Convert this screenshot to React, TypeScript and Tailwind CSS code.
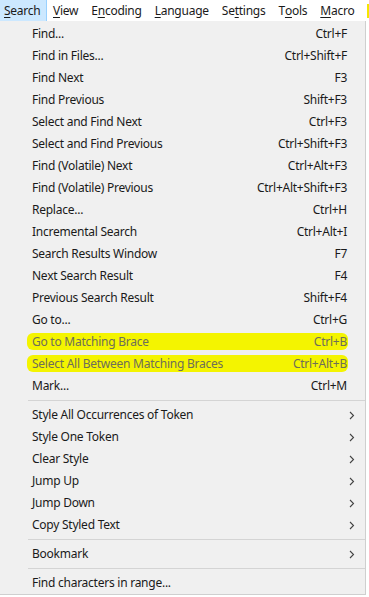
import React from "react";

type Item =
  | { kind: "item"; label: string; shortcut?: string; sub?: boolean; disabled?: boolean; marked?: boolean }
  | { kind: "sep" };

const items: Item[] = [
  { kind: "item", label: "Find...", shortcut: "Ctrl+F" },
  { kind: "item", label: "Find in Files...", shortcut: "Ctrl+Shift+F" },
  { kind: "item", label: "Find Next", shortcut: "F3" },
  { kind: "item", label: "Find Previous", shortcut: "Shift+F3" },
  { kind: "item", label: "Select and Find Next", shortcut: "Ctrl+F3" },
  { kind: "item", label: "Select and Find Previous", shortcut: "Ctrl+Shift+F3" },
  { kind: "item", label: "Find (Volatile) Next", shortcut: "Ctrl+Alt+F3" },
  { kind: "item", label: "Find (Volatile) Previous", shortcut: "Ctrl+Alt+Shift+F3" },
  { kind: "item", label: "Replace...", shortcut: "Ctrl+H" },
  { kind: "item", label: "Incremental Search", shortcut: "Ctrl+Alt+I" },
  { kind: "item", label: "Search Results Window", shortcut: "F7" },
  { kind: "item", label: "Next Search Result", shortcut: "F4" },
  { kind: "item", label: "Previous Search Result", shortcut: "Shift+F4" },
  { kind: "item", label: "Go to...", shortcut: "Ctrl+G" },
  { kind: "item", label: "Go to Matching Brace", shortcut: "Ctrl+B", disabled: true, marked: true },
  { kind: "item", label: "Select All Between Matching Braces", shortcut: "Ctrl+Alt+B", disabled: true, marked: true },
  { kind: "item", label: "Mark...", shortcut: "Ctrl+M" },
  { kind: "sep" },
  { kind: "item", label: "Style All Occurrences of Token", sub: true },
  { kind: "item", label: "Style One Token", sub: true },
  { kind: "item", label: "Clear Style", sub: true },
  { kind: "item", label: "Jump Up", sub: true },
  { kind: "item", label: "Jump Down", sub: true },
  { kind: "item", label: "Copy Styled Text", sub: true },
  { kind: "sep" },
  { kind: "item", label: "Bookmark", sub: true },
  { kind: "sep" },
  { kind: "item", label: "Find characters in range..." },
];

// menu bar entries, `u` = index of the mnemonic letter
const bar = [
  { label: "Search", u: 0 },
  { label: "View", u: 0 },
  { label: "Encoding", u: 1 },
  { label: "Language", u: 0 },
  { label: "Settings", u: 2 },
  { label: "Tools", u: 1 },
  { label: "Macro", u: 0 },
];

function Mnemonic({ label, u }: { label: string; u: number }) {
  return (
    <>
      {label.slice(0, u)}
      <span className="underline underline-offset-2">{label[u]}</span>
      {label.slice(u + 1)}
    </>
  );
}

function Chevron() {
  return (
    <svg width="6" height="9" viewBox="0 0 6 9" className="shrink-0">
      <path d="M1 1l3.5 3.5L1 8" fill="none" stroke="#444" strokeWidth="1.1" />
    </svg>
  );
}

export default function App() {
  return (
    <div
      className="w-[369px] h-[597px] bg-white overflow-hidden text-[12px] text-[#1a1a1a] tracking-[-0.25px]"
      style={{ fontFamily: '"Noto Sans", "Open Sans", sans-serif' }}
    >
      {/* Menu bar */}
      <div className="flex items-center h-[21px] bg-white">
        {bar.map((b, i) => (
          <div
            key={b.label}
            className={
              i === 0
                ? "h-full flex items-center pl-[4px] pr-[5px] bg-[#cce8ff] border-r border-[#99d1ff]"
                : "h-full flex items-center px-[6.5px]"
            }
          >
            <Mnemonic label={b.label} u={b.u} />
          </div>
        ))}
        <div className="ml-auto w-[2px] h-[14px] bg-[#f5e600]" />
      </div>

      {/* Dropdown */}
      <div className="flex">
        <div className="w-[366px] h-[574px] bg-[#f0f0f0] border-r border-b border-[#cfcfcf] pt-[2px] flex flex-col">
          {items.map((it, i) =>
            it.kind === "sep" ? (
              <div key={i} className="h-[7px] flex items-center pl-[28px]">
                <div className="w-full h-px bg-[#d4d4d4]" />
              </div>
            ) : (
              <div key={i} className="relative h-[22px] flex items-center pl-[32px] pr-[18px]">
                {it.marked && (
                  <div className="absolute left-[27px] right-[17px] top-[2px] bottom-[3px] rounded-[6px] bg-[#f4f400]" />
                )}
                <span className={"relative flex-1 " + (it.disabled ? "text-[#6e6e5a]" : "")}>{it.label}</span>
                {it.shortcut && (
                  <span className={"relative " + (it.disabled ? "text-[#6e6e5a]" : "")}>{it.shortcut}</span>
                )}
                {it.sub && (
                  <span className="relative -mr-[8px]">
                    <Chevron />
                  </span>
                )}
              </div>
            )
          )}
        </div>
      </div>
    </div>
  );
}
